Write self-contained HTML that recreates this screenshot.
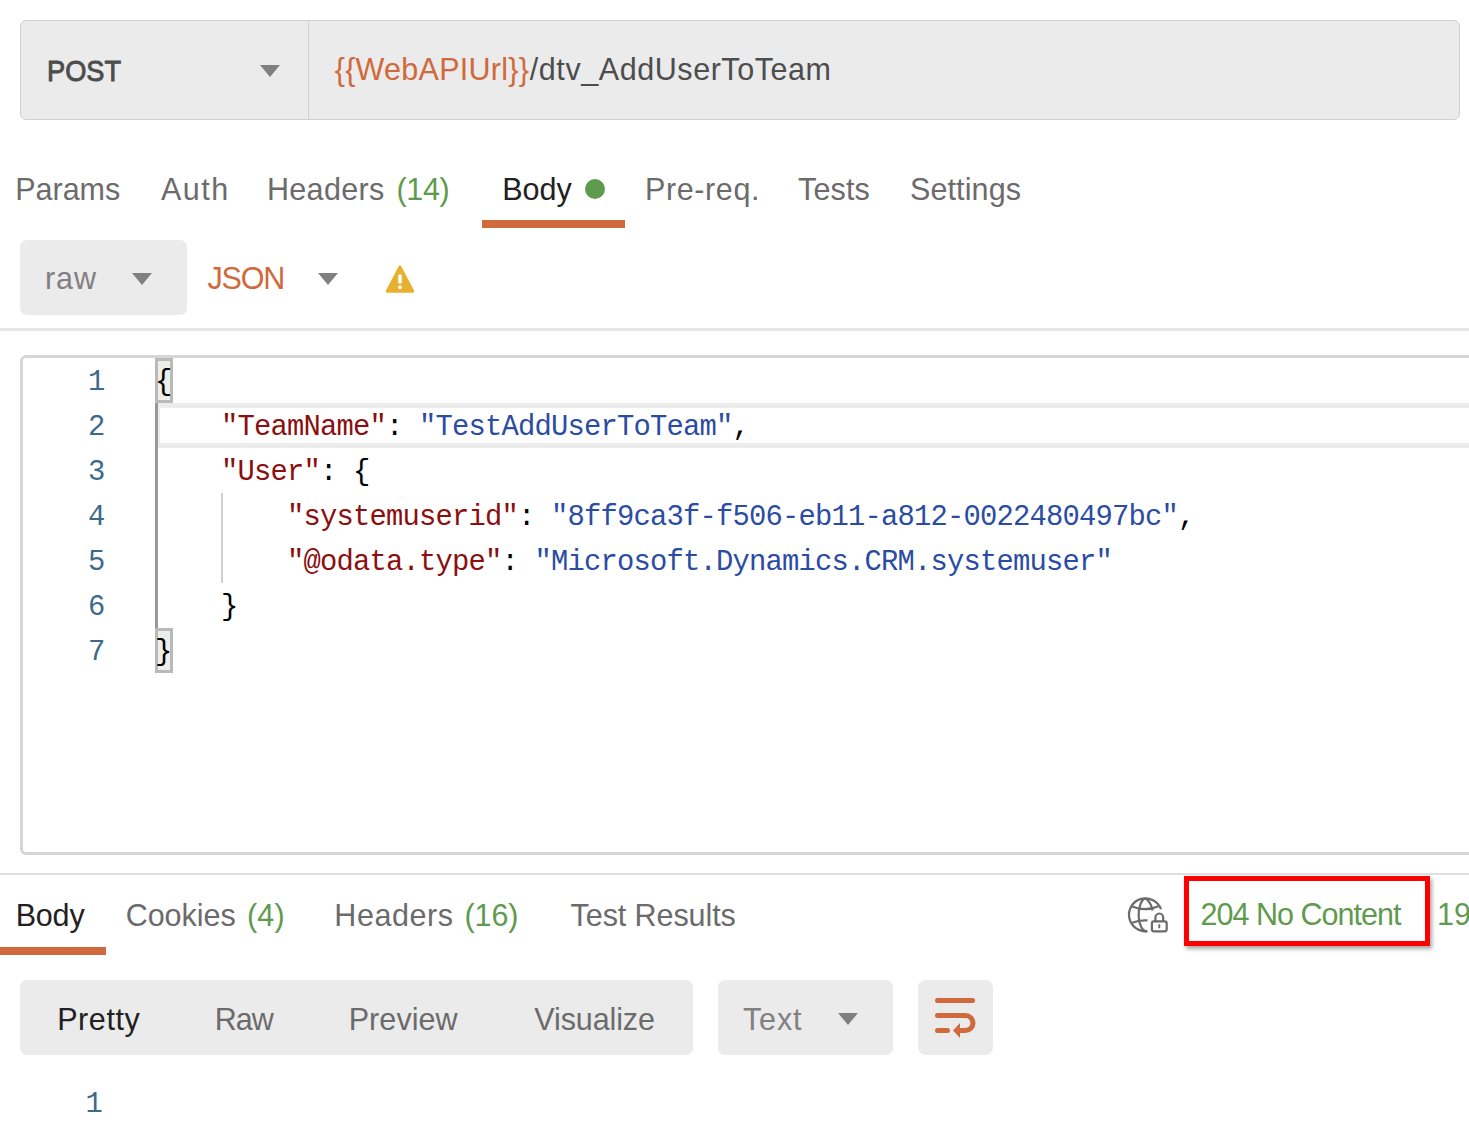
<!DOCTYPE html>
<html><head><meta charset="utf-8">
<style>
html,body{margin:0;padding:0;}
body{width:1469px;height:1148px;overflow:hidden;position:relative;background:#fff;font-family:"Liberation Sans", sans-serif;}
.t{position:absolute;white-space:pre;line-height:0;font-family:"Liberation Sans", sans-serif;}
.m{position:absolute;white-space:pre;line-height:0;font-family:"Liberation Mono", monospace;font-size:28.83px;letter-spacing:-0.8px;}
.box{position:absolute;box-sizing:border-box;}
.tri{position:absolute;width:0;height:0;border-left:10px solid transparent;border-right:10px solid transparent;border-top:12px solid #808080;}
</style></head><body>
<!-- URL bar -->
<div class="box" style="left:20px;top:20px;width:1440px;height:100px;background:#ebebeb;border:1px solid #d0d0d0;border-radius:6px;"></div>
<div class="box" style="left:308px;top:21px;width:1px;height:98px;background:#d0d0d0;"></div>
<div class="tri" style="left:260px;top:65px;"></div>
<!-- body tab underline + dot -->
<div class="box" style="left:482px;top:220px;width:143px;height:8px;background:#d0693b;"></div>
<div class="box" style="left:585px;top:179px;width:20px;height:20px;border-radius:50%;background:#5f9b4f;"></div>
<!-- raw dropdown -->
<div class="box" style="left:20px;top:240px;width:167px;height:75px;background:#ebebeb;border-radius:7px;"></div>
<div class="tri" style="left:132px;top:273px;"></div>
<div class="tri" style="left:318px;top:273px;"></div>
<!-- warning -->
<svg style="position:absolute;left:380px;top:260px" width="40" height="40" viewBox="380 260 40 40">
<path d="M400 267 L412.7 291.3 L387.3 291.3 Z" fill="#e6b12e" stroke="#e6b12e" stroke-width="3" stroke-linejoin="round"/>
<rect x="398.2" y="274.2" width="3.6" height="9.6" rx="1.8" fill="#fff"/>
<circle cx="400" cy="287.3" r="1.9" fill="#fff"/>
</svg>
<!-- separator -->
<div class="box" style="left:0;top:328px;width:1469px;height:3px;background:#e6e6e6;"></div>
<!-- editor -->
<div class="box" style="left:20px;top:355px;width:1460px;height:500px;border:3px solid #d6d6d6;border-radius:6px;"></div>
<!-- active line -->
<div class="box" style="left:158px;top:403px;width:1320px;height:45px;border-top:5px solid #ececec;border-bottom:5px solid #ececec;border-left:2px solid #ececec;"></div>
<!-- bracket boxes -->
<div class="box" style="left:155px;top:358px;width:18px;height:45px;background:#edeee9;border:3px solid #bababa;"></div>
<div class="box" style="left:155px;top:628px;width:18px;height:45px;background:#edeee9;border:3px solid #bababa;"></div>
<!-- fold guide + indent guide -->
<div class="box" style="left:155px;top:403px;width:3px;height:225px;background:#999;"></div>
<div class="box" style="left:221px;top:493px;width:2px;height:90px;background:#d0d0d0;"></div>
<!-- CODE -->
<div class="m" style="left:87.9px;top:383.33px;color:#3d6a8c">1</div>
<div class="m" style="left:155.0px;top:383.33px"><span style="color:#000000">{</span></div>
<div class="m" style="left:87.9px;top:428.33px;color:#3d6a8c">2</div>
<div class="m" style="left:155.0px;top:428.33px"><span style="color:#000000">    </span><span style="color:#8a1010">"TeamName"</span><span style="color:#000000">: </span><span style="color:#2b4ca3">"TestAddUserToTeam"</span><span style="color:#000000">,</span></div>
<div class="m" style="left:87.9px;top:473.33px;color:#3d6a8c">3</div>
<div class="m" style="left:155.0px;top:473.33px"><span style="color:#000000">    </span><span style="color:#8a1010">"User"</span><span style="color:#000000">: {</span></div>
<div class="m" style="left:87.9px;top:518.33px;color:#3d6a8c">4</div>
<div class="m" style="left:155.0px;top:518.33px"><span style="color:#000000">        </span><span style="color:#8a1010">"systemuserid"</span><span style="color:#000000">: </span><span style="color:#2b4ca3">"8ff9ca3f-f506-eb11-a812-0022480497bc"</span><span style="color:#000000">,</span></div>
<div class="m" style="left:87.9px;top:563.33px;color:#3d6a8c">5</div>
<div class="m" style="left:155.0px;top:563.33px"><span style="color:#000000">        </span><span style="color:#8a1010">"@odata.type"</span><span style="color:#000000">: </span><span style="color:#2b4ca3">"Microsoft.Dynamics.CRM.systemuser"</span></div>
<div class="m" style="left:87.9px;top:608.33px;color:#3d6a8c">6</div>
<div class="m" style="left:155.0px;top:608.33px"><span style="color:#000000">    </span><span style="color:#000000">}</span></div>
<div class="m" style="left:87.9px;top:653.33px;color:#3d6a8c">7</div>
<div class="m" style="left:155.0px;top:653.33px"><span style="color:#000000">}</span></div>
<div class="m" style="left:85.5px;top:1104.63px;color:#3d6a8c">1</div>
<!-- separator 2 -->
<div class="box" style="left:0;top:873px;width:1469px;height:2px;background:#e0e0e0;"></div>
<!-- response body underline -->
<div class="box" style="left:0;top:947px;width:106px;height:8px;background:#d0693b;"></div>
<!-- globe icon -->
<svg style="position:absolute;left:1120px;top:888px" width="60" height="54" viewBox="1120 888 60 54" fill="none" stroke="#6b6b6b" stroke-width="2.2" stroke-linecap="butt">
<path d="M1161 909.2 A16.5 16.5 0 1 0 1147.5 931.2"/>
<path d="M1132.2 906.6 Q1145.5 912 1158.5 906.3"/>
<path d="M1132.2 922.8 Q1139 919.8 1147.5 920.4"/>
<path d="M1145.5 898.3 A7.6 16.5 0 0 0 1147 931.2"/>
<path d="M1145.5 898.3 Q1151 902 1152.6 910.5"/>
<rect x="1151.9" y="921.3" width="14.8" height="10" rx="2"/>
<path d="M1155.4 921.3 V917.8 A3.9 4.3 0 0 1 1163.2 917.8 V921.3"/>
<path d="M1159.3 924.2 V928.2" stroke-width="1.9"/>
</svg>
<!-- red box -->
<div class="box" style="left:1184px;top:876px;width:246px;height:70px;border:5px solid #ff0000;box-shadow:2px 3px 4px rgba(0,0,0,0.35);"></div>
<!-- pretty segmented -->
<div class="box" style="left:20px;top:980px;width:673px;height:75px;background:#ebebeb;border-radius:7px;"></div>
<div class="box" style="left:718px;top:980px;width:175px;height:75px;background:#ebebeb;border-radius:7px;"></div>
<div class="tri" style="left:838px;top:1013px;"></div>
<div class="box" style="left:918px;top:980px;width:75px;height:75px;background:#ebebeb;border-radius:8px;"></div>
<svg style="position:absolute;left:918px;top:980px" width="75" height="75" viewBox="918 980 75 75" fill="none" stroke="#d0693b" stroke-width="5" stroke-linecap="round">
<path d="M937.5 1000.5 H972.5"/>
<path d="M937.5 1015.5 H965.5 A7.5 7.5 0 0 1 965.5 1030.5 H959"/>
<path d="M937.5 1030.5 H947.5"/>
<path d="M953 1030.5 L960 1023 L960 1038 Z" fill="#d0693b" stroke="none"/>
</svg>
<div class="t" style="left:47.25px;top:71.12px;font-size:29.07px;font-weight:400;color:#4d4d4d;letter-spacing:0px;transform:scaleX(0.9352);transform-origin:0 0;-webkit-text-stroke:0.9px #4d4d4d">POST</div>
<div class="t" style="left:334.7px;top:69.42px;font-size:30.52px;font-weight:400;color:#d0693b;letter-spacing:0.264px;">{{WebAPIUrl}}</div>
<div class="t" style="left:529.8px;top:69.42px;font-size:30.52px;font-weight:400;color:#4d4d4d;letter-spacing:0.558px;">/dtv_AddUserToTeam</div>
<div class="t" style="left:15.2px;top:188.62px;font-size:30.52px;font-weight:400;color:#6b6b6b;letter-spacing:-0.016px;">Params</div>
<div class="t" style="left:161.0px;top:188.62px;font-size:30.52px;font-weight:400;color:#6b6b6b;letter-spacing:1.499px;">Auth</div>
<div class="t" style="left:266.9px;top:188.62px;font-size:30.52px;font-weight:400;color:#6b6b6b;letter-spacing:0.336px;">Headers</div>
<div class="t" style="left:396.5px;top:188.62px;font-size:30.52px;font-weight:400;color:#5f9b4f;letter-spacing:-0.335px;">(14)</div>
<div class="t" style="left:502.3px;top:188.62px;font-size:30.52px;font-weight:400;color:#212121;letter-spacing:-0.032px;">Body</div>
<div class="t" style="left:645.0px;top:188.62px;font-size:30.52px;font-weight:400;color:#6b6b6b;letter-spacing:0.607px;">Pre-req.</div>
<div class="t" style="left:798.0px;top:188.62px;font-size:30.52px;font-weight:400;color:#6b6b6b;letter-spacing:0.134px;">Tests</div>
<div class="t" style="left:910.0px;top:188.62px;font-size:30.52px;font-weight:400;color:#6b6b6b;letter-spacing:0.099px;">Settings</div>
<div class="t" style="left:45.0px;top:278.22px;font-size:30.52px;font-weight:400;color:#808080;letter-spacing:0.933px;">raw</div>
<div class="t" style="left:207.43px;top:278.22px;font-size:30.52px;font-weight:400;color:#d0693b;letter-spacing:-1.2px;">JSON</div>
<div class="t" style="left:15.7px;top:915.12px;font-size:30.52px;font-weight:400;color:#212121;letter-spacing:-0.199px;">Body</div>
<div class="t" style="left:125.7px;top:915.12px;font-size:30.52px;font-weight:400;color:#6b6b6b;letter-spacing:-0.048px;">Cookies</div>
<div class="t" style="left:247.0px;top:915.12px;font-size:30.52px;font-weight:400;color:#5f9b4f;letter-spacing:0.183px;">(4)</div>
<div class="t" style="left:334.3px;top:915.12px;font-size:30.52px;font-weight:400;color:#6b6b6b;letter-spacing:0.553px;">Headers</div>
<div class="t" style="left:464.6px;top:915.12px;font-size:30.52px;font-weight:400;color:#5f9b4f;letter-spacing:-0.135px;">(16)</div>
<div class="t" style="left:570.6px;top:915.12px;font-size:30.52px;font-weight:400;color:#6b6b6b;letter-spacing:-0.085px;">Test Results</div>
<div class="t" style="left:1200.6px;top:914.02px;font-size:30.52px;font-weight:400;color:#5f9b4f;letter-spacing:-0.991px;">204 No Content</div>
<div class="t" style="left:57.2px;top:1019.22px;font-size:30.52px;font-weight:400;color:#212121;letter-spacing:0.571px;">Pretty</div>
<div class="t" style="left:214.8px;top:1019.22px;font-size:30.52px;font-weight:400;color:#6b6b6b;letter-spacing:-1.0px;">Raw</div>
<div class="t" style="left:348.7px;top:1019.22px;font-size:30.52px;font-weight:400;color:#6b6b6b;letter-spacing:0.067px;">Preview</div>
<div class="t" style="left:534.3px;top:1019.22px;font-size:30.52px;font-weight:400;color:#6b6b6b;letter-spacing:-0.112px;">Visualize</div>
<div class="t" style="left:743.0px;top:1019.22px;font-size:30.52px;font-weight:400;color:#808080;letter-spacing:0.838px;">Text</div>
<div class="t" style="left:1437.0px;top:914.32px;font-size:30.52px;font-weight:400;color:#5f9b4f;letter-spacing:0px;">193 ms</div>
</body></html>
